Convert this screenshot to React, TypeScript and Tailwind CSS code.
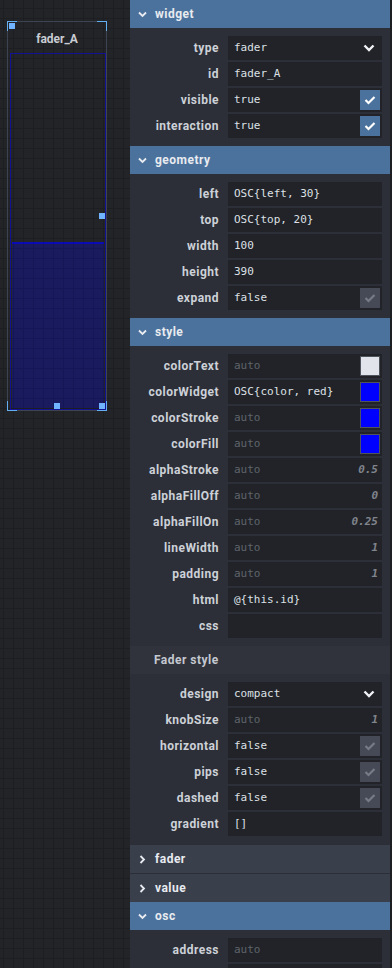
import React from "react";

type Row = {
  label: string;
  value?: string;
  placeholder?: string;
  num?: string;
  kind?: "select" | "check" | "color";
  on?: boolean;
  color?: string;
};

const sections: { title: string; open: boolean; sub?: string; rows?: Row[]; rows2?: Row[] }[] = [
  {
    title: "widget",
    open: true,
    rows: [
      { label: "type", value: "fader", kind: "select" },
      { label: "id", value: "fader_A" },
      { label: "visible", value: "true", kind: "check", on: true },
      { label: "interaction", value: "true", kind: "check", on: true },
    ],
  },
  {
    title: "geometry",
    open: true,
    rows: [
      { label: "left", value: "OSC{left, 30}" },
      { label: "top", value: "OSC{top, 20}" },
      { label: "width", value: "100" },
      { label: "height", value: "390" },
      { label: "expand", value: "false", kind: "check", on: false },
    ],
  },
  {
    title: "style",
    open: true,
    rows: [
      { label: "colorText", placeholder: "auto", kind: "color", color: "#e1e4eb" },
      { label: "colorWidget", value: "OSC{color, red}", kind: "color", color: "#0000ff" },
      { label: "colorStroke", placeholder: "auto", kind: "color", color: "#0000ff" },
      { label: "colorFill", placeholder: "auto", kind: "color", color: "#0000ff" },
      { label: "alphaStroke", placeholder: "auto", num: "0.5" },
      { label: "alphaFillOff", placeholder: "auto", num: "0" },
      { label: "alphaFillOn", placeholder: "auto", num: "0.25" },
      { label: "lineWidth", placeholder: "auto", num: "1" },
      { label: "padding", placeholder: "auto", num: "1" },
      { label: "html", value: "@{this.id}" },
      { label: "css", value: "" },
    ],
    sub: "Fader style",
    rows2: [
      { label: "design", value: "compact", kind: "select" },
      { label: "knobSize", placeholder: "auto", num: "1" },
      { label: "horizontal", value: "false", kind: "check", on: false },
      { label: "pips", value: "false", kind: "check", on: false },
      { label: "dashed", value: "false", kind: "check", on: false },
      { label: "gradient", value: "[]" },
    ],
  },
  { title: "fader", open: false },
  { title: "value", open: false },
  {
    title: "osc",
    open: true,
    rows: [
      { label: "address", placeholder: "auto" },
      { label: "", value: "" },
    ],
  },
];

function Chevron({ open }: { open: boolean }) {
  return (
    <svg width="9" height="9" viewBox="0 0 9 9" className="shrink-0">
      {open ? (
        <path d="M1 2.5 L4.5 6 L8 2.5" fill="none" stroke="#e8ebf0" strokeWidth="1.8" />
      ) : (
        <path d="M2.5 1 L6 4.5 L2.5 8" fill="none" stroke="#e8ebf0" strokeWidth="1.8" />
      )}
    </svg>
  );
}

function Field({ row }: { row: Row }) {
  return (
    <div className="flex h-[24px] items-center">
      <div className="w-[89px] shrink-0 text-right text-[12px] font-bold tracking-[0.04em] text-[#cdd1d8] [font-family:Roboto,sans-serif]">
        {row.label}
      </div>
      <div className="ml-[9px] flex h-full w-[154px] items-center bg-[#212328] pl-[6px] pr-[2px] text-[11px] [font-family:'DejaVu_Sans_Mono',monospace]">
        <span className={row.value ? "flex-1 text-[#dde0e6]" : "flex-1 text-[#5f636b]"}>
          {row.value ?? row.placeholder}
        </span>
        {row.num && (
          <span className="pr-[2px] font-bold italic text-[#80848c]">{row.num}</span>
        )}
        {row.kind === "select" && (
          <svg width="12" height="8" viewBox="0 0 12 8" className="mr-[5px]">
            <path d="M1.5 1.5 L6 6 L10.5 1.5" fill="none" stroke="#f0f2f5" strokeWidth="2.4" />
          </svg>
        )}
        {row.kind === "check" && (
          <div
            className={`flex h-[20px] w-[20px] items-center justify-center ${
              row.on ? "bg-[#4b729c]" : "bg-[#454a56]"
            }`}
          >
            <svg width="12" height="10" viewBox="0 0 12 10">
              <path
                d="M1.5 5 L4.5 8 L10.5 2"
                fill="none"
                stroke={row.on ? "#ffffff" : "#767b86"}
                strokeWidth="2.2"
              />
            </svg>
          </div>
        )}
        {row.kind === "color" && (
          <div
            className="h-[20px] w-[20px] border border-[#4f535c]"
            style={{ backgroundColor: row.color }}
          />
        )}
      </div>
    </div>
  );
}

function Header({ title, open }: { title: string; open: boolean }) {
  return (
    <div
      className={`flex h-[28px] items-center gap-[8px] pl-[8px] text-[12px] font-bold tracking-[0.04em] text-[#e8ebf0] [font-family:Roboto,sans-serif] ${
        open ? "bg-[#4b729c]" : "bg-[#3a3f4c]"
      }`}
    >
      <Chevron open={open} />
      <span>{title}</span>
    </div>
  );
}

function Canvas() {
  return (
    <div className="relative h-full w-[130px] shrink-0 bg-[#222428] bg-[linear-gradient(to_right,#1c1e21_1px,transparent_1px),linear-gradient(to_bottom,#1c1e21_1px,transparent_1px)] bg-[size:10px_10px] bg-[position:3px_8px]">
      {/* widget */}
      <div className="absolute left-[7px] top-[21px] h-[390px] w-[100px] border border-[#3d4351]">
        <div className="pt-[8px] text-center text-[12px] font-bold text-[#c9ccd3] [font-family:Roboto,sans-serif]">
          fader_A
        </div>
        <div className="absolute left-[2px] top-[31px] flex h-[357px] w-[96px] flex-col justify-end border border-[rgba(0,0,255,0.5)] p-[1px]">
          <div className="h-[166px] border-t-2 border-[rgba(0,0,255,0.55)] bg-[rgba(0,0,255,0.25)]" />
        </div>
      </div>
      {/* corner brackets */}
      <div className="absolute left-[7px] top-[21px] h-[10px] w-[10px] border-l border-t border-[#64aef2]" />
      <div className="absolute left-[97px] top-[21px] h-[10px] w-[10px] border-r border-t border-[#64aef2]" />
      <div className="absolute left-[7px] top-[401px] h-[10px] w-[10px] border-b border-l border-[#64aef2]" />
      <div className="absolute left-[97px] top-[401px] h-[10px] w-[10px] border-b border-r border-[#64aef2]" />
      {/* handles */}
      <div className="absolute left-[9px] top-[23px] h-[6px] w-[6px] bg-[#70b4ff]" />
      <div className="absolute left-[99px] top-[213px] h-[6px] w-[6px] bg-[#70b4ff]" />
      <div className="absolute left-[54px] top-[403px] h-[6px] w-[6px] bg-[#70b4ff]" />
      <div className="absolute left-[99px] top-[403px] h-[6px] w-[6px] bg-[#70b4ff]" />
    </div>
  );
}

export default function App() {
  return (
    <div className="flex h-[968px] w-[392px] overflow-hidden bg-[#222428]">
      <Canvas />
      <div className="flex w-[260px] shrink-0 flex-col bg-[#2c2f37]">
        {sections.map((s, i) => (
          <div key={i} className={!s.open && i > 0 ? "border-t border-[#2b2e36]" : ""}>
            <Header title={s.title} open={s.open} />
            {s.open && s.rows && (
              <div className="flex flex-col gap-[2px] py-[8px]">
                {s.rows.map((r, j) => (
                  <Field key={j} row={r} />
                ))}
              </div>
            )}
            {s.sub && (
              <>
                <div className="flex h-[28px] items-center bg-[#30333b] pl-[24px] text-[12px] font-bold tracking-[0.04em] text-[#c4c8d0] [font-family:Roboto,sans-serif]">
                  {s.sub}
                </div>
                <div className="flex flex-col gap-[2px] py-[8px]">
                  {s.rows2!.map((r, j) => (
                    <Field key={j} row={r} />
                  ))}
                </div>
              </>
            )}
          </div>
        ))}
      </div>
      <div className="h-full w-[2px] bg-[#1d1f23]" />
    </div>
  );
}
